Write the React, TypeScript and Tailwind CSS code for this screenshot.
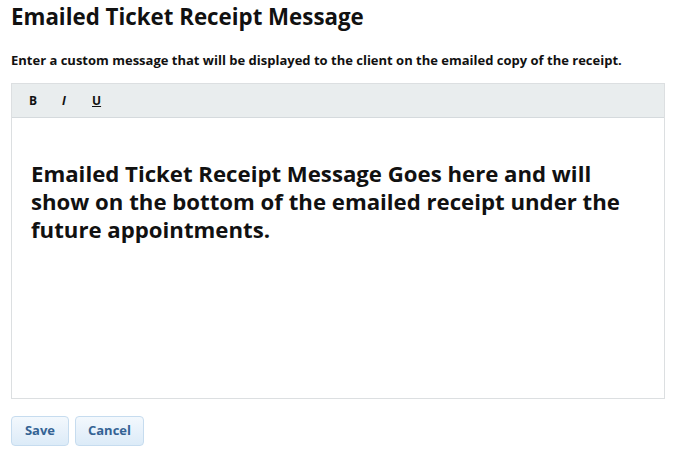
export default function App() {
  return (
    <div className="bg-white w-[688px] h-[467px] px-[11px] pt-[3px] text-[#111111]" style={{ fontFamily: '"Open Sans", sans-serif' }}>
      <h1 className="text-[22.3px] font-bold leading-[28px]">Emailed Ticket Receipt Message</h1>
      <p className="mt-[21px] text-[13px] font-bold leading-[16px]">
        Enter a custom message that will be displayed to the client on the emailed copy of the receipt.
      </p>
      <div className="mt-[15px] w-[654px] border border-[#dcdfe1]">
        <div className="h-[34px] bg-[#e9edee] border-b border-[#d5dadd] flex items-center pl-[17px] text-[12px] font-bold">
          <span className="w-[33px]">B</span>
          <span className="w-[30px] italic">I</span>
          <span className="underline">U</span>
        </div>
        <div className="h-[280px] px-[19px] pt-[42px] text-[22.2px] font-bold leading-[28px]">
          Emailed Ticket Receipt Message Goes here and will show on the bottom of the emailed receipt under the future appointments.
        </div>
      </div>
      <div className="mt-[17px] flex gap-[6px]">
        <button className="h-[30px] w-[58px] rounded-[4px] border border-[#c6dcef] bg-gradient-to-b from-[#f3f8fd] to-[#dcebf8] text-[#346394] text-[13px] font-bold">
          Save
        </button>
        <button className="h-[30px] w-[69px] rounded-[4px] border border-[#c6dcef] bg-gradient-to-b from-[#f3f8fd] to-[#dcebf8] text-[#346394] text-[13px] font-bold">
          Cancel
        </button>
      </div>
    </div>
  );
}
